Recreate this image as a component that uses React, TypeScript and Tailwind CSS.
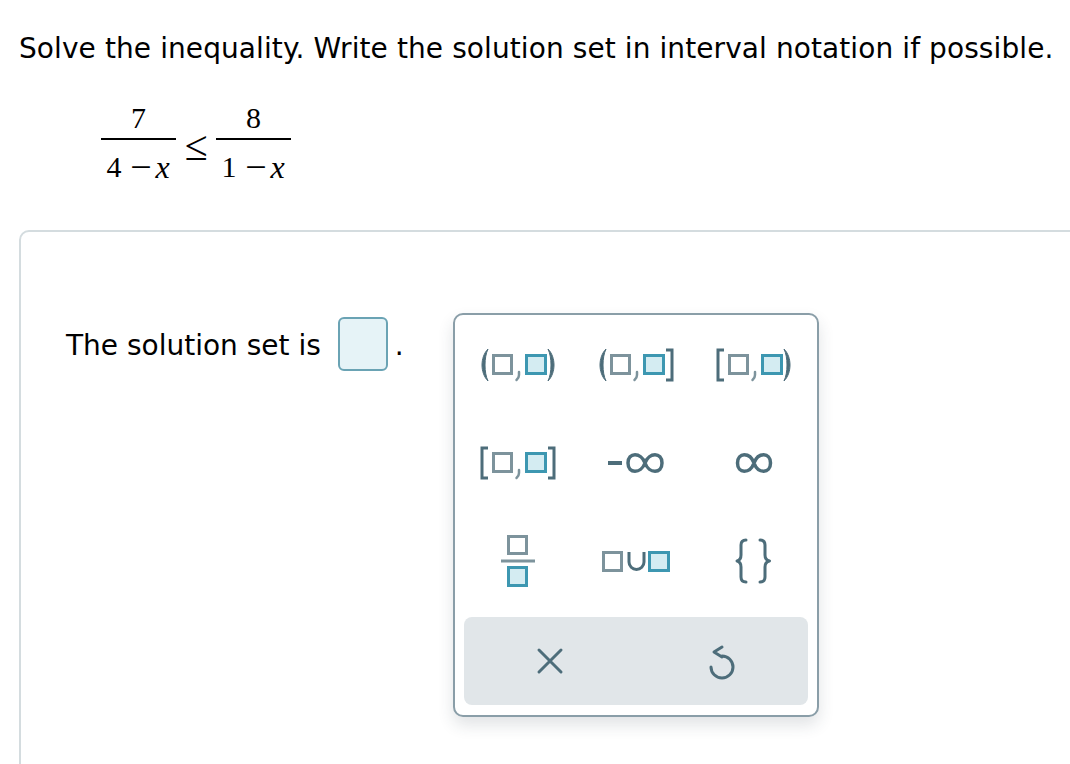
import { ReactNode } from "react";

const DARK = "#4d6d7a";
const GRAY = "#7d939c";
const TEAL = "#3d97b1";
const TEAL_FILL = "#d4ecf2";

type Side = "paren" | "bracket";

function GrayBox({ x, y, w = 18, h = 18 }: { x: number; y: number; w?: number; h?: number }) {
  return <rect x={x} y={y} width={w} height={h} fill="white" stroke={GRAY} strokeWidth={3} />;
}

function TealBox({ x, y, w = 18, h = 18 }: { x: number; y: number; w?: number; h?: number }) {
  return <rect x={x} y={y} width={w} height={h} fill={TEAL_FILL} stroke={TEAL} strokeWidth={3} />;
}

// (□,□) style interval buttons
function IntervalIcon({ left, right }: { left: Side; right: Side }) {
  return (
    <svg width="80" height="36" viewBox="0 0 80 36">
      {left === "paren" ? (
        <path d="M10 2 C2 10 2 26 10 34 C6 26 6 10 10 2 Z" fill={DARK} stroke={DARK} strokeWidth={1} strokeLinejoin="round" />
      ) : (
        <path d="M10 3 H4 V33 H10" fill="none" stroke={DARK} strokeWidth={3} />
      )}
      <GrayBox x={15.5} y={8.5} />
      <path d="M41 25 V28 Q41 31 38.5 33" fill="none" stroke={GRAY} strokeWidth={2.5} strokeLinecap="round" />
      <TealBox x={48.5} y={8.5} w={19} />
      {right === "paren" ? (
        <path d="M70 2 C78 10 78 26 70 34 C74 26 74 10 70 2 Z" fill={DARK} stroke={DARK} strokeWidth={1} strokeLinejoin="round" />
      ) : (
        <path d="M70 3 H76 V33 H70" fill="none" stroke={DARK} strokeWidth={3} />
      )}
    </svg>
  );
}

function NegInfinityIcon() {
  return (
    <svg width="60" height="24" viewBox="0 0 60 24">
      <rect x={2} y={10} width={14} height={4} fill={DARK} />
      <path
        d="M39 12 C35 1 22 1 22 12 C22 23 35 23 39 12 C43 1 56 1 56 12 C56 23 43 23 39 12 Z"
        fill="none"
        stroke={DARK}
        strokeWidth={3.5}
      />
    </svg>
  );
}

function InfinityIcon() {
  return (
    <svg width="40" height="24" viewBox="0 0 40 24">
      <path
        d="M20 12 C16 1 3.5 1 3.5 12 C3.5 23 16 23 20 12 C24 1 36.5 1 36.5 12 C36.5 23 24 23 20 12 Z"
        fill="none"
        stroke={DARK}
        strokeWidth={3.5}
      />
    </svg>
  );
}

function FractionIcon() {
  return (
    <svg width="40" height="56" viewBox="0 0 40 56">
      <GrayBox x={10.5} y={3.5} h={17} />
      <rect x={3} y={26.5} width={34} height={3} fill={GRAY} />
      <TealBox x={10.5} y={34.5} />
    </svg>
  );
}

function UnionIcon() {
  return (
    <svg width="72" height="28" viewBox="0 0 72 28">
      <GrayBox x={3.5} y={5.5} />
      <path d="M29 5 V15 A7.5 7.5 0 0 0 44 15 V5" fill="none" stroke={DARK} strokeWidth={3} />
      <TealBox x={49.5} y={5.5} w={19} />
    </svg>
  );
}

function BracesIcon() {
  return (
    <svg width="40" height="50" viewBox="0 0 40 50">
      <path
        d="M12 4 Q7 4 7 9 V19 Q7 24 3 25 Q7 26 7 31 V41 Q7 46 12 46"
        fill="none"
        stroke={DARK}
        strokeWidth={3}
        strokeLinecap="round"
        strokeLinejoin="round"
      />
      <path
        d="M26 4 Q31 4 31 9 V19 Q31 24 35.5 25 Q31 26 31 31 V41 Q31 46 26 46"
        fill="none"
        stroke={DARK}
        strokeWidth={3}
        strokeLinecap="round"
        strokeLinejoin="round"
      />
    </svg>
  );
}

function ClearIcon() {
  return (
    <svg width="28" height="28" viewBox="0 0 28 28">
      <path d="M3 3 L25 25 M25 3 L3 25" stroke={DARK} strokeWidth={3} strokeLinecap="round" />
    </svg>
  );
}

function UndoIcon() {
  return (
    <svg width="30" height="38" viewBox="0 0 30 38">
      <path d="M15 13 A11 11 0 1 1 4 24" fill="none" stroke={DARK} strokeWidth={3} strokeLinecap="round" />
      <path d="M15 4 L7 9 L15 14" fill="none" stroke={DARK} strokeWidth={3} strokeLinecap="round" strokeLinejoin="round" />
    </svg>
  );
}

function Fraction({ num, den }: { num: ReactNode; den: ReactNode }) {
  return (
    <div className="flex flex-col items-center w-[75px]">
      <div className="h-[30px] mb-[5px] text-[30px] leading-[30px]">{num}</div>
      <div className="h-[2px] w-full bg-black" />
      <div className="h-[30px] mt-[12px] flex leading-[30px]">{den}</div>
    </div>
  );
}

function Den({ n }: { n: string }) {
  return (
    <>
      <span className="inline-block w-[16px] text-center text-[30px]">{n}</span>
      <span className="inline-block ml-[6px] w-[26px] text-center text-[38px]">−</span>
      <span className="inline-block w-[17px] text-center italic text-[32px]">x</span>
    </>
  );
}

const PaletteCell = ({ children }: { children: ReactNode }) => (
  <button className="flex items-center justify-center">{children}</button>
);

export default function App() {
  return (
    <div className="w-[1070px] h-[764px] overflow-hidden bg-white text-black font-['DejaVu_Sans',sans-serif]">
      {/* Question */}
      <div className="pt-[32px] pl-[19px] text-[28px] leading-[33px] tracking-[0.09px] whitespace-nowrap">
        Solve the inequality. Write the solution set in interval notation if possible.
      </div>

      {/* Inequality */}
      <div className="mt-[38px] pl-[101px] flex items-center font-['Liberation_Serif',serif]">
        <Fraction num="7" den={<Den n="4" />} />
        <div className="w-[40px] h-[30px] text-center mt-[6px] text-[42px] leading-[30px]">≤</div>
        <Fraction num="8" den={<Den n="1" />} />
      </div>

      {/* Answer area */}
      <div className="mt-[48px] ml-[19px] w-[1080px] h-[560px] border-2 border-[#d4dcdf] rounded-tl-[10px] pt-[81px]">
        <div className="flex items-start">
          <div className="w-[432px] pl-[45px] h-[54px] mt-[4px] flex items-center">
            <span className="mt-[3px] text-[28px] leading-[33px] whitespace-nowrap">The solution set is</span>
            <div className="ml-[17px] w-[50px] h-[54px] shrink-0 border-2 border-[#6aa3b4] bg-[#e6f3f7] rounded-[6px]" />
            <span className="mt-[3px] ml-[7px] text-[28px] leading-[33px]">.</span>
          </div>

          {/* Palette */}
          <div className="w-[366px] h-[404px] border-2 border-[#8a9ea8] rounded-[10px] bg-white shadow-[0_8px_16px_rgba(40,60,70,0.14)] pt-[1px] px-[4px] flex flex-col">
            <div className="grid grid-cols-3 grid-rows-[98px_98px_98px]">
              <PaletteCell>
                <IntervalIcon left="paren" right="paren" />
              </PaletteCell>
              <PaletteCell>
                <IntervalIcon left="paren" right="bracket" />
              </PaletteCell>
              <PaletteCell>
                <IntervalIcon left="bracket" right="paren" />
              </PaletteCell>
              <PaletteCell>
                <IntervalIcon left="bracket" right="bracket" />
              </PaletteCell>
              <PaletteCell>
                <NegInfinityIcon />
              </PaletteCell>
              <PaletteCell>
                <InfinityIcon />
              </PaletteCell>
              <PaletteCell>
                <FractionIcon />
              </PaletteCell>
              <PaletteCell>
                <UnionIcon />
              </PaletteCell>
              <PaletteCell>
                <BracesIcon />
              </PaletteCell>
            </div>
            <div className="mt-[7px] mx-[5px] h-[88px] rounded-[8px] bg-[#e1e6e9] grid grid-cols-2">
              <button className="flex items-center justify-center">
                <ClearIcon />
              </button>
              <button className="flex items-center justify-center pt-[2px]">
                <UndoIcon />
              </button>
            </div>
          </div>
        </div>
      </div>
    </div>
  );
}
